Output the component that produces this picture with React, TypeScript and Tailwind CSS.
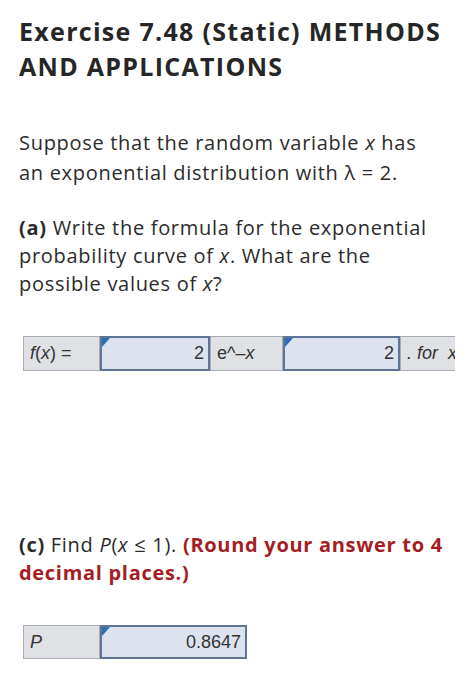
import React from "react"

function Marker() {
  return <span className="absolute left-0 top-0 w-0 h-0 border-t-[9px] border-t-[#2f6db5] border-r-[8px] border-r-transparent" />
}

function Label({ children, w }: { children: React.ReactNode; w: string }) {
  return (
    <div className={`${w} shrink-0 h-full flex items-center px-1.5 bg-[#dfe1e5] border border-[#a9adb3] whitespace-nowrap`}>
      {children}
    </div>
  )
}

function Answer({ value, w }: { value: string; w: string }) {
  return (
    <div className={`relative ${w} shrink-0 h-full flex items-center justify-end pr-1 bg-[#dde3ee] border-2 border-[#5e7598]`}>
      <Marker />
      {value}
    </div>
  )
}

export default function App() {
  return (
    <div className="min-h-screen bg-white text-[#2b2b2b] overflow-hidden" style={{ fontFamily: "'Open Sans', sans-serif" }}>
      <div className="pl-[19px] pr-[24px] pt-[14px]">
        <h1 className="text-[25px] leading-[35px] font-bold tracking-[1.3px] text-[#262626]">
          Exercise 7.48 (Static) METHODS AND APPLICATIONS
        </h1>

        <p className="mt-[44px] text-[20px] leading-[30px] tracking-[0.7px]">
          Suppose that the random variable <i>x</i> has an exponential distribution with λ = 2.
        </p>

        <p className="mt-[26px] text-[20px] leading-[28px] tracking-[0.7px]">
          <b>(a)</b> Write the formula for the exponential probability curve of <i>x</i>. What are the possible values of <i>x</i>?
        </p>
      </div>

      <div
        className="mt-[38px] ml-[23px] h-[35px] w-[432px] overflow-hidden flex text-[18px] text-[#333]"
        style={{ fontFamily: "'Liberation Sans', Arial, sans-serif" }}
      >
        <Label w="w-[77px]"><i>f</i>(<i>x</i>) =</Label>
        <Answer value="2" w="w-[110px]" />
        <Label w="w-[73px]">e^–<i>x</i></Label>
        <Answer value="2" w="w-[117px]" />
        <Label w="w-[90px]"><i>.&nbsp;for&nbsp;&nbsp;x</i></Label>
      </div>

      <div className="pl-[19px] pr-[24px]">
        <p className="mt-[160px] text-[20px] leading-[28px] tracking-[0.7px]">
          <b>(c)</b> Find <i>P</i>(<i>x</i> ≤ 1).{" "}
          <b className="text-[#a51d24]">(Round your answer to 4 decimal places.)</b>
        </p>
      </div>

      <div
        className="mt-[38px] ml-[23px] h-[34px] flex text-[18px] text-[#333]"
        style={{ fontFamily: "'Liberation Sans', Arial, sans-serif" }}
      >
        <Label w="w-[77px]"><i>P</i></Label>
        <Answer value="0.8647" w="w-[147px]" />
      </div>
    </div>
  )
}
